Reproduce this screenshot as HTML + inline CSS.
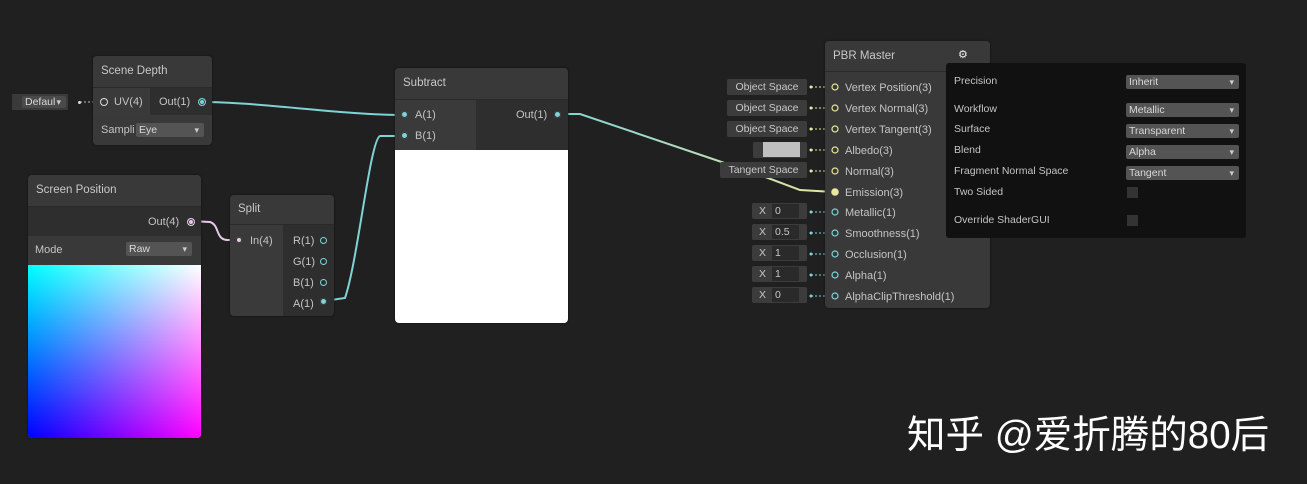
<!DOCTYPE html><html><head><meta charset="utf-8"><style>
body{margin:0;width:1307px;height:484px;background:#202020;overflow:hidden;position:relative;font-family:"Liberation Sans","DejaVu Sans",sans-serif;font-size:11px;color:#c4c4c4}
.a{position:absolute}
.node{position:absolute;background:#2e2e2e;border-radius:4px;overflow:hidden;box-shadow:0 0 2px #111}
.hd{position:absolute;left:0;right:0;top:0;background:#393939;color:#c8c8c8;font-size:11.5px;padding-left:8px;border-bottom:1px solid #2a2a2a}
.dd{position:absolute;background:#545454;color:#d8d8d8;font-size:10.5px;padding-left:3px;box-sizing:border-box;border-radius:2px}
.dd:after{content:"▾";position:absolute;right:5px;top:0;font-size:9px;color:#ccc}
.fld{position:absolute;background:#3c3c3c;color:#c8c8c8;font-size:10.5px;text-align:center;border-radius:2px}
.dot{position:absolute;width:3px;height:3px;border-radius:50%}
</style></head><body>
<svg class="a" style="left:0;top:0" width="1307" height="484">
<path d="M202 102 C260 102,340 115,405 115" stroke="#7fd3d6" stroke-width="2" fill="none"/>
<path d="M324 301 L345 298 C358 260,370 140,380 136 L405 136" stroke="#7fd3d6" stroke-width="2" fill="none"/>
<path d="M191 221 L210 222 C220 225,215 240,228 240 L239 240" stroke="#e8c8e8" stroke-width="2" fill="none"/>
<defs><linearGradient id="g" x1="0" x2="1"><stop offset="0" stop-color="#7fd3d6"/><stop offset="1" stop-color="#e8e8a0"/></linearGradient></defs>
<path d="M558 114 L580 114 L760 175 L800 190 L834 192" stroke="url(#g)" stroke-width="2" fill="none"/>
<path d="M80 102 H103" stroke="#bbb" stroke-width="1" stroke-dasharray="2 2"/>
</svg>
<div class="a" style="left:12px;top:94px;width:56px;height:16px;background:#3a3a3a"></div>
<div class="dd" style="left:22px;top:96px;width:44px;height:12px;line-height:12px;background:#4a4a4a">Defaul</div>
<div class="dot" style="left:78px;top:101px;background:#ddd"></div>
<div class="node" style="left:93px;top:56px;width:119px;height:89px;background:#393939">
<div class="hd" style="height:31px;line-height:31px">Scene Depth</div>
<div class="a" style="left:0;top:32px;width:57px;height:27px;background:#3a3a3a"></div>
<div class="a" style="left:57px;top:32px;width:62px;height:27px;background:#2e2e2e"></div>
<div class="a" style="left:7px;top:42px;width:6px;height:6px;border:1px solid #ddd;border-radius:50%"></div>
<div class="a" style="left:21px;top:40px">UV(4)</div>
<div class="a" style="left:66px;top:40px">Out(1)</div>
<div class="a" style="left:105px;top:42px;width:6px;height:6px;border:1px solid #7fd3d6;border-radius:50%;background:#7fd3d6;box-shadow:inset 0 0 0 1px #333"></div>
<div class="a" style="left:8px;top:68px">Sampli</div>
<div class="dd" style="left:43px;top:67px;width:68px;height:14px;line-height:14px">Eye</div>
</div>
<div class="node" style="left:28px;top:175px;width:173px;height:263px;background:#393939">
<div class="hd" style="height:31px;line-height:31px">Screen Position</div>
<div class="a" style="left:0;top:32px;width:173px;height:29px;background:#2e2e2e"></div>
<div class="a" style="left:120px;top:41px">Out(4)</div>
<div class="a" style="left:159px;top:43px;width:6px;height:6px;border:1px solid #e8c8e8;border-radius:50%;background:#e8c8e8;box-shadow:inset 0 0 0 1px #333"></div>
<div class="a" style="left:7px;top:69px">Mode</div>
<div class="dd" style="left:98px;top:67px;width:66px;height:14px;line-height:14px">Raw</div>
<div class="a" style="left:0;top:90px;width:173px;height:173px;background:linear-gradient(to right,#00ffff,#ffffff);"></div>
<div class="a" style="left:0;top:90px;width:173px;height:173px;background:linear-gradient(to right,#0000ff,#ff00ff);-webkit-mask-image:linear-gradient(to bottom,transparent,#000);mask-image:linear-gradient(to bottom,transparent,#000)"></div>
</div>
<div class="node" style="left:230px;top:195px;width:104px;height:121px;background:#2e2e2e">
<div class="hd" style="height:29px;line-height:29px">Split</div>
<div class="a" style="left:0;top:30px;width:53px;height:91px;background:#3a3a3a"></div>
<div class="a" style="left:6px;top:42px;width:6px;height:6px;border-radius:50%;background:#e8c8e8;box-shadow:inset 0 0 0 1px #333"></div>
<div class="a" style="left:20px;top:40px">In(4)</div>
<div class="a" style="left:63px;top:40px">R(1)</div>
<div class="a" style="left:63px;top:61px">G(1)</div>
<div class="a" style="left:63px;top:82px">B(1)</div>
<div class="a" style="left:63px;top:103px">A(1)</div>
<div class="a" style="left:90px;top:42px;width:5px;height:5px;border:1px solid #7fd3d6;border-radius:50%"></div>
<div class="a" style="left:90px;top:63px;width:5px;height:5px;border:1px solid #7fd3d6;border-radius:50%"></div>
<div class="a" style="left:90px;top:84px;width:5px;height:5px;border:1px solid #7fd3d6;border-radius:50%"></div>
<div class="a" style="left:90px;top:103px;width:7px;height:7px;border-radius:50%;background:#7fd3d6;box-shadow:inset 0 0 0 1px #333"></div>
</div>
<div class="node" style="left:395px;top:68px;width:173px;height:255px;background:#2e2e2e">
<div class="hd" style="height:31px;line-height:31px">Subtract</div>
<div class="a" style="left:0;top:32px;width:81px;height:50px;background:#3a3a3a"></div>
<div class="a" style="left:6px;top:43px;width:7px;height:7px;border-radius:50%;background:#7fd3d6;box-shadow:inset 0 0 0 1px #333"></div>
<div class="a" style="left:6px;top:64px;width:7px;height:7px;border-radius:50%;background:#7fd3d6;box-shadow:inset 0 0 0 1px #333"></div>
<div class="a" style="left:20px;top:41px">A(1)</div>
<div class="a" style="left:20px;top:62px">B(1)</div>
<div class="a" style="left:121px;top:41px">Out(1)</div>
<div class="a" style="left:159px;top:43px;width:7px;height:7px;border-radius:50%;background:#7fd3d6;box-shadow:inset 0 0 0 1px #333"></div>
<div class="a" style="left:0;top:82px;width:173px;height:173px;background:#fff"></div>
</div>
<div class="fld" style="left:727px;top:79px;width:80px;height:16px;line-height:16px">Object Space</div>
<div class="fld" style="left:727px;top:100px;width:80px;height:16px;line-height:16px">Object Space</div>
<div class="fld" style="left:727px;top:121px;width:80px;height:16px;line-height:16px">Object Space</div>
<div class="fld" style="left:753px;top:142px;width:54px;height:16px"></div>
<div class="a" style="left:763px;top:142px;width:37px;height:15px;background:#c0c0c0"></div>
<div class="fld" style="left:720px;top:162px;width:87px;height:16px;line-height:16px">Tangent Space</div>
<div class="fld" style="left:752px;top:203px;width:55px;height:16px;line-height:16px;text-align:left"><span style="margin-left:7px">X</span><span class="a" style="left:20px;top:1px;width:24px;height:14px;background:#2a2a2a;text-align:left;padding-left:3px;line-height:14px">0</span></div>
<div class="fld" style="left:752px;top:224px;width:55px;height:16px;line-height:16px;text-align:left"><span style="margin-left:7px">X</span><span class="a" style="left:20px;top:1px;width:24px;height:14px;background:#2a2a2a;text-align:left;padding-left:3px;line-height:14px">0.5</span></div>
<div class="fld" style="left:752px;top:245px;width:55px;height:16px;line-height:16px;text-align:left"><span style="margin-left:7px">X</span><span class="a" style="left:20px;top:1px;width:24px;height:14px;background:#2a2a2a;text-align:left;padding-left:3px;line-height:14px">1</span></div>
<div class="fld" style="left:752px;top:266px;width:55px;height:16px;line-height:16px;text-align:left"><span style="margin-left:7px">X</span><span class="a" style="left:20px;top:1px;width:24px;height:14px;background:#2a2a2a;text-align:left;padding-left:3px;line-height:14px">1</span></div>
<div class="fld" style="left:752px;top:287px;width:55px;height:16px;line-height:16px;text-align:left"><span style="margin-left:7px">X</span><span class="a" style="left:20px;top:1px;width:24px;height:14px;background:#2a2a2a;text-align:left;padding-left:3px;line-height:14px">0</span></div>
<svg class="a" style="left:805px;top:80px" width="40" height="225">
<g stroke-width="1" stroke-dasharray="2 2">
<path d="M6 7H26M6 28H26M6 49H26M6 70H26M6 91H26" stroke="#e8e8a0"/>
<path d="M6 132H26M6 153H26M6 174H26M6 195H26M6 216H26" stroke="#7fd3d6"/>
</g>
<g fill="#e8e8a0"><circle cx="6" cy="7" r="1.5"/><circle cx="6" cy="28" r="1.5"/><circle cx="6" cy="49" r="1.5"/><circle cx="6" cy="70" r="1.5"/><circle cx="6" cy="91" r="1.5"/></g>
<g fill="#7fd3d6"><circle cx="6" cy="132" r="1.5"/><circle cx="6" cy="153" r="1.5"/><circle cx="6" cy="174" r="1.5"/><circle cx="6" cy="195" r="1.5"/><circle cx="6" cy="216" r="1.5"/></g>
</svg>
<div class="node" style="left:825px;top:41px;width:165px;height:267px;background:#393939">
<div class="hd" style="height:30px;line-height:30px">PBR Master</div>
<div class="a" style="left:133px;top:7px;color:#eee;font-size:11px">⚙</div>
<svg class="a" style="left:0;top:40px" width="16" height="225">
<g fill="none" stroke-width="1.2">
<circle cx="10" cy="6" r="3" stroke="#e8e8a0"/><circle cx="10" cy="27" r="3" stroke="#e8e8a0"/><circle cx="10" cy="48" r="3" stroke="#e8e8a0"/><circle cx="10" cy="69" r="3" stroke="#e8e8a0"/><circle cx="10" cy="90" r="3" stroke="#e8e8a0"/>
<circle cx="10" cy="111" r="3.2" stroke="#e8e8a0" fill="#e8e8a0"/>
<circle cx="10" cy="131" r="3" stroke="#7fd3d6"/><circle cx="10" cy="152" r="3" stroke="#7fd3d6"/><circle cx="10" cy="173" r="3" stroke="#7fd3d6"/><circle cx="10" cy="194" r="3" stroke="#7fd3d6"/><circle cx="10" cy="215" r="3" stroke="#7fd3d6"/>
</g></svg>
<div class="a" style="left:20px;top:37px;line-height:20.9px;font-size:11px">Vertex Position(3)<br>Vertex Normal(3)<br>Vertex Tangent(3)<br>Albedo(3)<br>Normal(3)<br>Emission(3)<br>Metallic(1)<br>Smoothness(1)<br>Occlusion(1)<br>Alpha(1)<br>AlphaClipThreshold(1)</div>
</div>
<div class="a" style="left:946px;top:63px;width:300px;height:175px;background:#111;border-radius:3px;font-size:10.5px">
<div class="a" style="left:8px;top:12px">Precision</div>
<div class="a" style="left:8px;top:40px">Workflow</div>
<div class="a" style="left:8px;top:60px">Surface</div>
<div class="a" style="left:8px;top:81px">Blend</div>
<div class="a" style="left:8px;top:102px">Fragment Normal Space</div>
<div class="a" style="left:8px;top:123px">Two Sided</div>
<div class="a" style="left:8px;top:151px">Override ShaderGUI</div>
<div class="dd" style="left:180px;top:12px;width:113px;height:14px;line-height:14px">Inherit</div>
<div class="dd" style="left:180px;top:40px;width:113px;height:14px;line-height:14px">Metallic</div>
<div class="dd" style="left:180px;top:61px;width:113px;height:14px;line-height:14px">Transparent</div>
<div class="dd" style="left:180px;top:82px;width:113px;height:14px;line-height:14px">Alpha</div>
<div class="dd" style="left:180px;top:103px;width:113px;height:14px;line-height:14px">Tangent</div>
<div class="a" style="left:181px;top:124px;width:11px;height:11px;background:#333"></div>
<div class="a" style="left:181px;top:152px;width:11px;height:11px;background:#333"></div>
</div>
<div class="a" style="left:907px;top:404px;color:#fff;font-size:38.5px;font-family:'Liberation Sans','Noto Sans CJK SC',sans-serif;white-space:nowrap">知乎 @爱折腾的80后</div>
</body></html>
